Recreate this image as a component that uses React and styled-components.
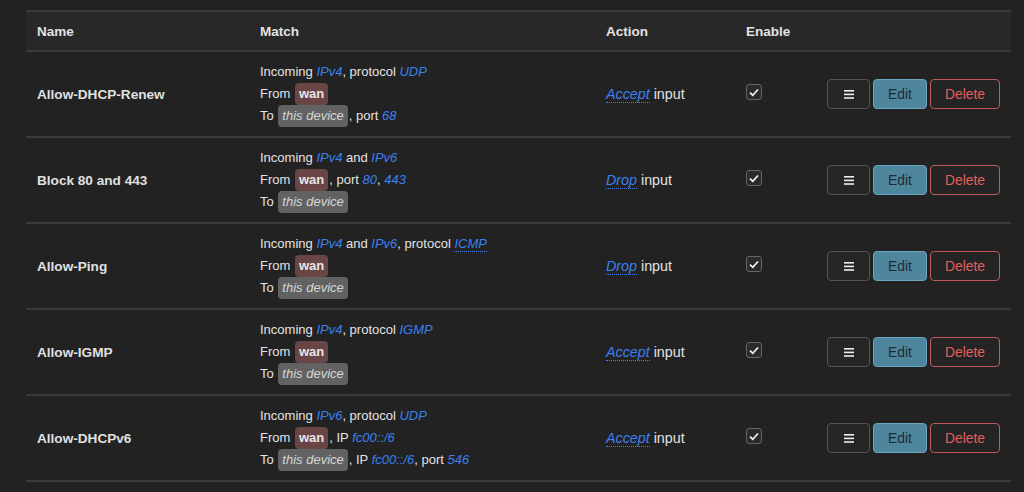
import React from "react";
import styled, { createGlobalStyle } from "styled-components";

const Global = createGlobalStyle`
  html, body {
    margin: 0;
    padding: 0;
    background: #222222;
    color: #dedede;
    font-family: "Liberation Sans", Arial, sans-serif;
    font-size: 13px;
  }
`;

const Page = styled.div`
  padding: 10px 13px 0 26px;
  width: 1024px;
  box-sizing: border-box;
`;

const Table = styled.div`
  display: grid;
  grid-template-columns: 223px 346px 140px 80px 1fr;
  border-top: 2px solid #3a3a3a;
`;

const Row = styled.div`
  display: contents;

  & > div {
    border-bottom: 2px solid #3a3a3a;
    background: ${(p) => (p.$head ? "#282828" : "transparent")};
    height: ${(p) => (p.$head ? "40px" : "86px")};
  }
`;

const Cell = styled.div`
  display: flex;
  align-items: center;
  padding: 0 11px;
  box-sizing: border-box;
  justify-content: ${(p) => (p.$right ? "flex-end" : "flex-start")};
`;

const HeadText = styled.span`
  font-weight: bold;
  font-size: 13.5px;
  color: #e2e2e2;
`;

const Name = styled.span`
  font-weight: bold;
  font-size: 13.6px;
  color: #e0e0e0;
`;

const Lines = styled.div`
  display: flex;
  flex-direction: column;
`;

const Line = styled.div`
  height: 22px;
  line-height: 22px;
  white-space: nowrap;
  color: #e2e2e2;
  font-size: ${(p) => (p.$big ? "14.3px" : "13px")};
`;

const Val = styled.i`
  color: #3a80f0;
`;

const Badge = styled.span`
  display: inline-block;
  height: 22px;
  line-height: 22px;
  padding: 0 4px;
  border-radius: 4px;
  margin: 0 1px;
  background: ${(p) => (p.$zone ? "#6a4546" : "#626262")};
  font-weight: ${(p) => (p.$zone ? "bold" : "normal")};
  font-style: ${(p) => (p.$zone ? "normal" : "italic")};
  color: ${(p) => (p.$zone ? "#e6e6e6" : "#d6d6d6")};
`;

const Target = styled.i`
  color: #3a80f0;
  border-bottom: 1px dotted #3a80f0;
`;

const Check = styled.span`
  width: 14px;
  height: 14px;
  border: 1px solid #666;
  border-radius: 3px;
  background: #2b2b2b;
  display: flex;
  align-items: center;
  justify-content: center;
  margin-top: -4px;
`;

const Buttons = styled.div`
  display: flex;
  gap: 3px;
`;

const Btn = styled.button`
  height: 30px;
  box-sizing: border-box;
  border-radius: 4px;
  font-family: "Liberation Sans", Arial, sans-serif;
  font-size: 13.8px;
  padding: 0;
  width: ${(p) => p.$w}px;
  display: flex;
  align-items: center;
  justify-content: center;
  ${(p) =>
    p.$kind === "edit"
      ? "background: #4f869e; border: 1px solid #67a6c4; color: #1e2a31;"
      : p.$kind === "del"
      ? "background: #242424; border: 1px solid #c25a5a; color: #e0605e;"
      : "background: #262626; border: 1px solid #555; color: #eee;"}
`;

const rules = [
  {
    name: "Allow-DHCP-Renew",
    lines: [
      <>Incoming <Val>IPv4</Val>, protocol <Val>UDP</Val></>,
      <>From <Badge $zone>wan</Badge></>,
      <>To <Badge>this device</Badge>, port <Val>68</Val></>,
    ],
    target: "Accept",
  },
  {
    name: "Block 80 and 443",
    lines: [
      <>Incoming <Val>IPv4</Val> and <Val>IPv6</Val></>,
      <>From <Badge $zone>wan</Badge>, port <Val>80</Val>, <Val>443</Val></>,
      <>To <Badge>this device</Badge></>,
    ],
    target: "Drop",
  },
  {
    name: "Allow-Ping",
    lines: [
      <>Incoming <Val>IPv4</Val> and <Val>IPv6</Val>, protocol <Target>ICMP</Target></>,
      <>From <Badge $zone>wan</Badge></>,
      <>To <Badge>this device</Badge></>,
    ],
    target: "Drop",
  },
  {
    name: "Allow-IGMP",
    lines: [
      <>Incoming <Val>IPv4</Val>, protocol <Val>IGMP</Val></>,
      <>From <Badge $zone>wan</Badge></>,
      <>To <Badge>this device</Badge></>,
    ],
    target: "Accept",
  },
  {
    name: "Allow-DHCPv6",
    lines: [
      <>Incoming <Val>IPv6</Val>, protocol <Val>UDP</Val></>,
      <>From <Badge $zone>wan</Badge>, IP <Val>fc00::/6</Val></>,
      <>To <Badge>this device</Badge>, IP <Val>fc00::/6</Val>, port <Val>546</Val></>,
    ],
    target: "Accept",
  },
];

const MenuIcon = () => (
  <svg width="10" height="9" viewBox="0 0 10 9">
    <rect x="0" y="0" width="10" height="1.6" fill="#eee" />
    <rect x="0" y="3.6" width="10" height="1.6" fill="#eee" />
    <rect x="0" y="7.2" width="10" height="1.6" fill="#eee" />
  </svg>
);

const CheckIcon = () => (
  <svg width="10" height="9" viewBox="0 0 10 9">
    <path d="M1 4.6 L3.8 7.3 L9 1.5" stroke="#f2f2f2" strokeWidth="1.8" fill="none" />
  </svg>
);

const App = () => {
  return (
    <>
      <Global />
      <Page>
        <Table>
          <Row $head>
            <Cell><HeadText>Name</HeadText></Cell>
            <Cell><HeadText>Match</HeadText></Cell>
            <Cell><HeadText>Action</HeadText></Cell>
            <Cell><HeadText>Enable</HeadText></Cell>
            <Cell />
          </Row>
          {rules.map((r) => (
            <Row key={r.name}>
              <Cell><Name>{r.name}</Name></Cell>
              <Cell>
                <Lines>
                  {r.lines.map((l, i) => (
                    <Line key={i}>{l}</Line>
                  ))}
                </Lines>
              </Cell>
              <Cell>
                <Line $big><Target>{r.target}</Target> input</Line>
              </Cell>
              <Cell>
                <Check><CheckIcon /></Check>
              </Cell>
              <Cell $right>
                <Buttons>
                  <Btn $w={43}><MenuIcon /></Btn>
                  <Btn $w={54} $kind="edit">Edit</Btn>
                  <Btn $w={70} $kind="del">Delete</Btn>
                </Buttons>
              </Cell>
            </Row>
          ))}
        </Table>
      </Page>
    </>
  );
};

export default App;
